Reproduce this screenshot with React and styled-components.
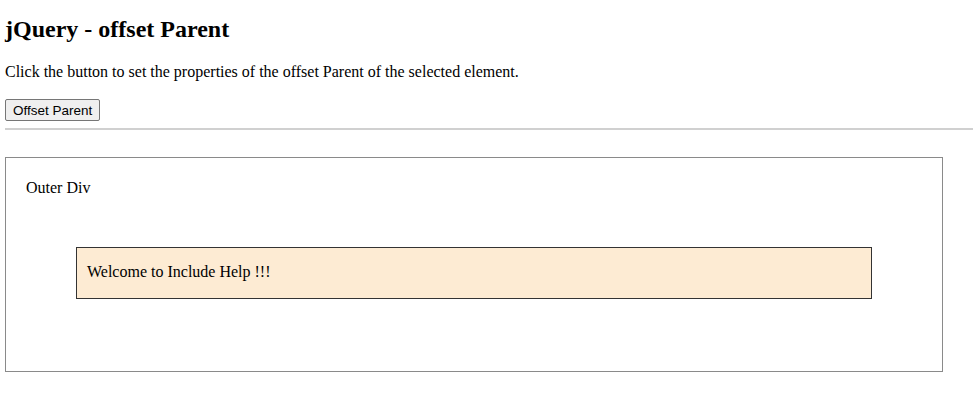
import React from "react";
import styled, { createGlobalStyle } from "styled-components";

const Global = createGlobalStyle`
  html, body { margin: 0; padding: 0; background: #fff; }
  body { padding: 0 5px; font-family: "Liberation Serif", "Times New Roman", serif; color: #000; }
`;

const Title = styled.h2`
  margin: 0;
  padding-top: 15px;
  font-size: 24px;
  line-height: 28px;
  font-weight: bold;
`;

const Text = styled.p`
  margin: 19px 0 0;
  font-size: 16px;
  line-height: 20px;
`;

const Button = styled.button`
  display: block;
  margin-top: 17px;
  height: 22px;
  padding: 0 7px;
  font-family: "Liberation Sans", Arial, sans-serif;
  font-size: 13.5px;
  background: #efefef;
  border: 1px solid #767676;
  border-radius: 2px;
  color: #000;
`;

const Rule = styled.hr`
  margin: 7px -5px 0 0;
  border: none;
  border-top: 2px solid #d0d0d0;
`;

const Outer = styled.div`
  margin-top: 27px;
  width: 938px;
  height: 215px;
  box-sizing: border-box;
  border: 1px solid #8a8a8a;
  padding: 21px 20px;
  font-size: 16px;
  line-height: 18px;
`;

const Inner = styled.div`
  margin: 50px 0 0 50px;
  width: 796px;
  height: 52px;
  box-sizing: border-box;
  border: 1px solid #333;
  background: #fdebd3;
  padding: 15px 10px;
`;

export default function App() {
  return (
    <>
      <Global />
      <Title>jQuery - offset Parent</Title>
      <Text>Click the button to set the properties of the offset Parent of the selected element.</Text>
      <Button>Offset Parent</Button>
      <Rule />
      <Outer>
        Outer Div
        <Inner>Welcome to Include Help !!!</Inner>
      </Outer>
    </>
  );
}
